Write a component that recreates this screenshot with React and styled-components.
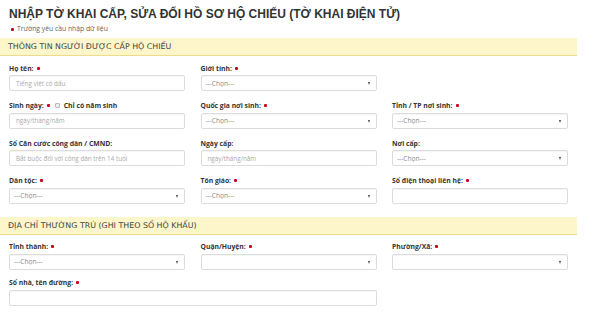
import React from "react";
import styled, { createGlobalStyle } from "styled-components";

const GlobalStyle = createGlobalStyle`
  html, body {
    margin: 0;
    padding: 0;
    background: #ffffff;
  }
  * {
    box-sizing: border-box;
  }
`;

const Page = styled.div`
  width: 600px;
  height: 314px;
  overflow: hidden;
  font-family: "Open Sans", "Liberation Sans", sans-serif;
  color: #333;
`;

const Title = styled.h1`
  margin: 0;
  padding: 6px 0 0 9px;
  font-family: "Liberation Sans", Arial, sans-serif;
  font-weight: bold;
  font-size: 12px;
  line-height: 16px;
  color: #333;
`;

const Note = styled.div`
  display: flex;
  align-items: center;
  gap: 3px;
  padding: 2px 0 0 11px;
  font-size: 6.8px;
  line-height: 10px;
  color: #666;
`;

const Dot = styled.span`
  display: inline-block;
  width: 3px;
  height: 3px;
  background: #d0021b;
  border-radius: 1px;
  margin-left: ${({ $gap }) => ($gap ? "3px" : "0")};
`;

const SectionHeader = styled.div`
  width: 577px;
  height: 18px;
  margin-top: ${({ $top }) => $top}px;
  padding-left: 8px;
  display: flex;
  align-items: center;
  background: #fdf6ca;
  border-bottom: 1px solid #eddc8c;
  font-family: "DejaVu Sans", Verdana, sans-serif;
  font-size: 7.9px;
  color: #444;
  text-transform: uppercase;
`;

const Grid = styled.div`
  display: grid;
  grid-template-columns: repeat(3, 176px);
  column-gap: 15.5px;
  row-gap: ${({ $rowGap }) => $rowGap}px;
  padding: 7px 0 0 9px;
`;

const Field = styled.div`
  display: flex;
  flex-direction: column;
  grid-column: ${({ $span }) => ($span ? `span ${$span}` : "auto")};
`;

const Label = styled.label`
  display: flex;
  align-items: center;
  height: 10px;
  margin-bottom: 2px;
  font-size: 6.8px;
  font-weight: 700;
  color: #333;
  white-space: nowrap;
`;

const Check = styled.span`
  display: inline-block;
  width: 5px;
  height: 5px;
  border: 1px solid #bbb;
  border-radius: 1px;
  background: #eee;
  margin: 0 4px 0 5px;
`;

const Box = styled.div`
  position: relative;
  height: 16px;
  border: 1px solid #dcdcdc;
  border-radius: 2px;
  background: #fff;
  box-shadow: inset 0 1px 1px rgba(0, 0, 0, 0.04);
  display: flex;
  align-items: center;
  padding-left: ${({ $select }) => ($select ? "4px" : "6px")};
  font-size: ${({ $select }) => ($select ? "6.6px" : "6.3px")};
  color: ${({ $select }) => ($select ? "#888" : "#aaa")};
`;

const Arrow = styled.span`
  position: absolute;
  right: 6px;
  top: 6px;
  width: 0;
  height: 0;
  border-left: 1.5px solid transparent;
  border-right: 1.5px solid transparent;
  border-top: 3px solid #444;
`;

const Empty = styled.div``;

const Input = ({ text }) => <Box>{text}</Box>;

const Select = ({ text }) => (
  <Box $select>
    {text}
    <Arrow />
  </Box>
);

const App = () => {
  return (
    <Page>
      <GlobalStyle />
      <Title>NHẬP TỜ KHAI CẤP, SỬA ĐỔI HỒ SƠ HỘ CHIẾU (TỜ KHAI ĐIỆN TỬ)</Title>
      <Note>
        <Dot />
        Trường yêu cầu nhập dữ liệu
      </Note>

      <SectionHeader $top={4}>Thông tin người được cấp hộ chiếu</SectionHeader>
      <Grid $rowGap={9.5}>
        <Field>
          <Label>
            Họ tên: <Dot $gap />
          </Label>
          <Input text="Tiếng việt có dấu" />
        </Field>
        <Field>
          <Label>
            Giới tính: <Dot $gap />
          </Label>
          <Select text="---Chọn---" />
        </Field>
        <Empty />

        <Field>
          <Label>
            Sinh ngày: <Dot $gap />
            <Check />
            Chỉ có năm sinh
          </Label>
          <Input text="ngày/tháng/năm" />
        </Field>
        <Field>
          <Label>
            Quốc gia nơi sinh: <Dot $gap />
          </Label>
          <Select text="---Chọn---" />
        </Field>
        <Field>
          <Label>
            Tỉnh / TP nơi sinh: <Dot $gap />
          </Label>
          <Select text="---Chọn---" />
        </Field>

        <Field>
          <Label>Số Căn cước công dân / CMND:</Label>
          <Input text="Bắt buộc đối với công dân trên 14 tuổi" />
        </Field>
        <Field>
          <Label>Ngày cấp:</Label>
          <Input text="ngày/tháng/năm" />
        </Field>
        <Field>
          <Label>Nơi cấp:</Label>
          <Select text="---Chọn---" />
        </Field>

        <Field>
          <Label>
            Dân tộc: <Dot $gap />
          </Label>
          <Select text="---Chọn---" />
        </Field>
        <Field>
          <Label>
            Tôn giáo: <Dot $gap />
          </Label>
          <Select text="---Chọn---" />
        </Field>
        <Field>
          <Label>
            Số điện thoại liên hệ: <Dot $gap />
          </Label>
          <Input />
        </Field>
      </Grid>

      <SectionHeader $top={13}>Địa chỉ thường trú (ghi theo sổ hộ khẩu)</SectionHeader>
      <Grid $rowGap={8}>
        <Field>
          <Label>
            Tỉnh thành: <Dot $gap />
          </Label>
          <Select text="---Chọn---" />
        </Field>
        <Field>
          <Label>
            Quận/Huyện: <Dot $gap />
          </Label>
          <Select />
        </Field>
        <Field>
          <Label>
            Phường/Xã: <Dot $gap />
          </Label>
          <Select />
        </Field>
        <Field $span={2}>
          <Label>
            Số nhà, tên đường: <Dot $gap />
          </Label>
          <Input />
        </Field>
      </Grid>
    </Page>
  );
};

export default App;
